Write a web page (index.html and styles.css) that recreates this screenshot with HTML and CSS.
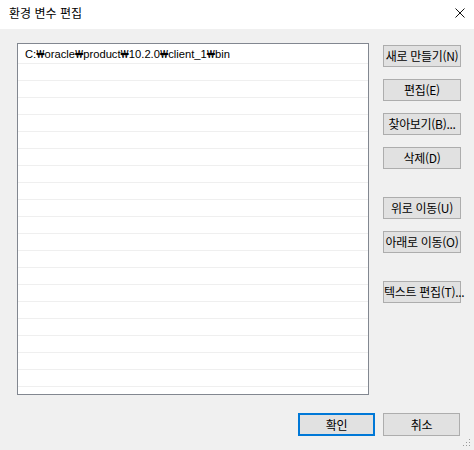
FILE: index.html
```html
<!DOCTYPE html>
<html lang="ko">
<head>
<meta charset="utf-8">
<title>환경 변수 편집</title>
<link rel="stylesheet" href="styles.css">
</head>
<body>
<div class="window">
  <div class="titlebar">
    <span class="title">환경 변수 편집</span>
    <span class="close">
      <svg width="10" height="10" viewBox="0 0 10 10"><path d="M0.5 0.5 L9.5 9.5 M9.5 0.5 L0.5 9.5" stroke="#111" stroke-width="1" fill="none"/></svg>
    </span>
  </div>
  <div class="content">
    <div class="list">
      <div class="row">C:<span class="won">₩</span>oracle<span class="won">₩</span>product<span class="won">₩</span>10.2.0<span class="won">₩</span>client_1<span class="won">₩</span>bin</div>
      <div class="row"></div><div class="row"></div><div class="row"></div><div class="row"></div>
      <div class="row"></div><div class="row"></div><div class="row"></div><div class="row"></div>
      <div class="row"></div><div class="row"></div><div class="row"></div><div class="row"></div>
      <div class="row"></div><div class="row"></div><div class="row"></div><div class="row"></div>
      <div class="row"></div><div class="row"></div><div class="row"></div><div class="row"></div>
    </div>
    <div class="side">
      <div class="group">
        <button class="btn">새로 만들기(N)</button>
        <button class="btn">편집(E)</button>
        <button class="btn">찾아보기(B)...</button>
        <button class="btn">삭제(D)</button>
      </div>
      <div class="group">
        <button class="btn">위로 이동(U)</button>
        <button class="btn">아래로 이동(O)</button>
      </div>
      <div class="group">
        <button class="btn">텍스트 편집(T)...</button>
      </div>
    </div>
  </div>
  <div class="footer">
    <button class="btn btn-foot btn-default">확인</button>
    <button class="btn btn-foot">취소</button>
  </div>
  <svg class="grip" width="8" height="8" viewBox="0 0 8 8">
    <rect x="6" y="0" width="1" height="1" fill="#9a9a9a"/>
    <rect x="3" y="3" width="1" height="1" fill="#9a9a9a"/>
    <rect x="6" y="3" width="1" height="1" fill="#9a9a9a"/>
    <rect x="0" y="6" width="1" height="1" fill="#9a9a9a"/>
    <rect x="3" y="6" width="1" height="1" fill="#9a9a9a"/>
    <rect x="6" y="6" width="1" height="1" fill="#9a9a9a"/>
  </svg>
</div>
</body>
</html>
```

FILE: styles.css
```css
* { box-sizing: border-box; }
html, body {
  margin: 0;
  padding: 0;
  width: 474px;
  height: 450px;
  overflow: hidden;
}
body {
  background: #f0f0f0;
  font-family: "Liberation Sans", "DejaVu Sans", "Noto Sans CJK KR", sans-serif;
  font-size: 12px;
  color: #000;
}
.window {
  position: relative;
  width: 474px;
  height: 450px;
}
.titlebar {
  height: 29px;
  background: #fff;
  display: flex;
  align-items: center;
  justify-content: space-between;
  padding: 0 9px 3px 9px;
}
.title {
  font-family: "Noto Sans CJK KR", sans-serif;
  font-size: 12px;
  line-height: 16px;
  color: #000;
}
.close {
  display: flex;
  width: 10px;
  height: 10px;
}
.content {
  display: flex;
  padding: 14px 0 0 17px;
  gap: 14px;
}
.list {
  width: 352px;
  height: 352px;
  background: #fff;
  border: 1px solid #828790;
  padding-top: 3px;
  overflow: hidden;
}
.row {
  height: 17px;
  border-bottom: 1px solid #efefef;
  padding-left: 7px;
  line-height: 15px;
  white-space: nowrap;
  font-family: "Liberation Sans", "DejaVu Sans", "Noto Sans CJK KR", sans-serif;
  font-size: 11.2px;
}
.won {
  font-family: Roboto, "Open Sans", "DejaVu Sans", sans-serif;
}
.side {
  display: flex;
  flex-direction: column;
  gap: 28px;
  padding-top: 2px;
}
.group {
  display: flex;
  flex-direction: column;
  gap: 12px;
}
.btn {
  width: 78px;
  height: 22px;
  background: #e1e1e1;
  border: 1px solid #adadad;
  border-radius: 0;
  padding: 0;
  margin: 0;
  font-family: "Noto Sans CJK KR", sans-serif;
  font-size: 12px;
  line-height: 18px;
  color: #000;
  white-space: nowrap;
  letter-spacing: -0.3px;
}
.footer {
  display: flex;
  justify-content: flex-end;
  gap: 8px;
  padding: 18px 14px 0 0;
}
.btn-foot {
  width: 77px;
  height: 23px;
}
.btn-default {
  border: 2px solid #0078d7;
}
.grip {
  position: absolute;
  right: 3px;
  bottom: 3px;
}
```
